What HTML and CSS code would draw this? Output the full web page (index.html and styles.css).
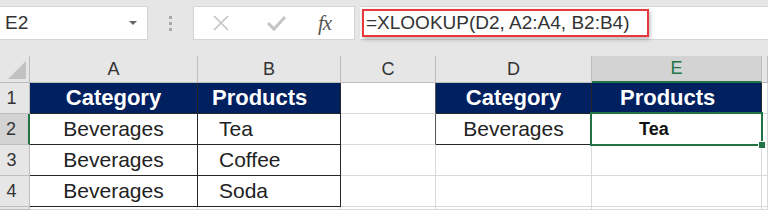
FILE: index.html
```html
<!DOCTYPE html>
<html>
<head>
    <title>XLOOKUP example</title>
    <link rel="stylesheet" href="styles.css">
</head>
<body>
    <div class="toolbar">
        <div class="namebox">
            <span>E2</span>
            <span class="caret"></span>
        </div>
        <div class="grip"><i></i><i></i><i></i></div>
        <div class="fx-buttons">
            <svg class="btn-icon" width="22" height="18" viewBox="0 0 22 18">
                <path d="M4 2 L18 16 M18 2 L4 16" stroke="#c4c4c4" stroke-width="1.6" fill="none"/>
            </svg>
            <svg class="btn-icon" width="22" height="18" viewBox="0 0 22 18">
                <path d="M3 9 L9 15 L20 3" stroke="#c4c4c4" stroke-width="3" fill="none"/>
            </svg>
            <span class="fx">fx</span>
        </div>
        <div class="formula">
            <span class="highlight">=XLOOKUP(D2, A2:A4, B2:B4)</span>
        </div>
    </div>

    <div class="sheet">
        <!-- column headers -->
        <div class="corner"><span class="tri"></span></div>
        <div class="hdr">A</div>
        <div class="hdr">B</div>
        <div class="hdr">C</div>
        <div class="hdr">D</div>
        <div class="hdr hdr-sel">E</div>
        <div class="hdr"></div>

        <!-- row 1 -->
        <div class="rh">1</div>
        <div class="cell navy tb center">Category</div>
        <div class="cell navy tb pad-b">Products</div>
        <div class="cell edge"></div>
        <div class="cell navy tb center">Category</div>
        <div class="cell navy tb pad-e">Products</div>
        <div class="cell"></div>

        <!-- row 2 -->
        <div class="rh rh-sel">2</div>
        <div class="cell tb center">Beverages</div>
        <div class="cell tb pad-b2">Tea</div>
        <div class="cell edge"></div>
        <div class="cell tb center">Beverages</div>
        <div class="cell active">Tea</div>
        <div class="cell"></div>

        <!-- row 3 -->
        <div class="rh">3</div>
        <div class="cell tb center">Beverages</div>
        <div class="cell tb pad-b2">Coffee</div>
        <div class="cell"></div>
        <div class="cell"></div>
        <div class="cell"></div>
        <div class="cell"></div>

        <!-- row 4 -->
        <div class="rh">4</div>
        <div class="cell tb center">Beverages</div>
        <div class="cell tb pad-b2">Soda</div>
        <div class="cell"></div>
        <div class="cell"></div>
        <div class="cell"></div>
        <div class="cell"></div>

        <!-- top sliver of row 5 -->
        <div class="rh"></div>
        <div class="cell"></div>
        <div class="cell"></div>
        <div class="cell"></div>
        <div class="cell"></div>
        <div class="cell"></div>
        <div class="cell"></div>
    </div>
</body>
</html>
```

FILE: styles.css
```css
body {
    margin: 0;
    width: 768px;
    height: 210px;
    overflow: hidden;
    background: #fff;
    font-family: "Liberation Sans", Arial, sans-serif;
    color: #222;
}

/* top bar */
.toolbar {
    display: flex;
    align-items: flex-start;
    height: 56px;
    padding-top: 6px;
    box-sizing: border-box;
    background: #e6e6e6;
}

.namebox {
    width: 148px;
    height: 34px;
    box-sizing: border-box;
    background: #fff;
    border: 1px solid #d4d4d4;
    border-left: none;
    display: flex;
    align-items: center;
    justify-content: space-between;
    padding: 0 10px 0 5px;
    font-size: 19px;
    color: #333;
}

.caret {
    width: 0;
    height: 0;
    border-left: 4px solid transparent;
    border-right: 4px solid transparent;
    border-top: 4px solid #666;
}

.grip {
    width: 45px;
    display: flex;
    flex-direction: column;
    align-items: center;
    gap: 3px;
    padding-top: 10px;
}

.grip i {
    width: 3px;
    height: 3px;
    background: #a8a8a8;
}

.fx-buttons {
    width: 162px;
    height: 34px;
    box-sizing: border-box;
    background: #fff;
    border: 1px solid #d4d4d4;
    display: flex;
    align-items: center;
    padding-left: 16px;
    gap: 33px;
}

.fx {
    font-family: "Liberation Serif", "Times New Roman", serif;
    font-style: italic;
    font-size: 21px;
    color: #555;
    letter-spacing: -1px;
    margin-left: -2px;
}

.formula {
    flex: 1;
    height: 34px;
    margin-left: 5px;
    box-sizing: border-box;
    background: #fff;
    border-top: 1px solid #d4d4d4;
    border-bottom: 1px solid #d4d4d4;
    padding: 2px 0 0 2px;
}

.highlight {
    display: inline-block;
    height: 28px;
    line-height: 24px;
    box-sizing: border-box;
    padding: 0 17px 0 2px;
    border: 2px solid #e8383d;
    box-shadow: 1px 2px 4px rgba(0,0,0,0.3);
    font-size: 19px;
    color: #333;
}

/* worksheet */
.sheet {
    display: grid;
    grid-template-columns: 30px 168px 143px 95px 156px 170px 1fr;
    grid-template-rows: 27px 31px 31px 31px 31px 3px;
}

.sheet > div {
    box-sizing: border-box;
    border-right: 1px solid #d9d9d9;
    border-bottom: 1px solid #d9d9d9;
    display: flex;
    align-items: center;
    white-space: nowrap;
}

.corner {
    background: #e6e6e6;
    position: relative;
}

.sheet > .corner,
.sheet > .hdr,
.sheet > .rh {
    border-color: #bdbdbd;
}

.tri {
    position: absolute;
    right: 3px;
    bottom: 3px;
    width: 0;
    height: 0;
    border-left: 18px solid transparent;
    border-bottom: 18px solid #c2c2c2;
}

.hdr {
    background: #e6e6e6;
    justify-content: center;
    font-size: 18px;
    color: #333;
}

.sheet > .hdr-sel {
    background: #d3d3d3;
    color: #217346;
    border-bottom: 2px solid #217346;
}

.rh {
    background: #e6e6e6;
    justify-content: center;
    padding-right: 6px;
    font-size: 18px;
    color: #333;
}

.sheet > .rh-sel {
    background: #d3d3d3;
    border-right: 2px solid #217346;
}

.cell {
    font-size: 21px;
    color: #222;
}

.center {
    justify-content: center;
}

.pad-b {
    padding-left: 14px;
}

.pad-b2 {
    padding-left: 21px;
}

.pad-e {
    padding-left: 28px;
}

.sheet > .tb {
    border-right-color: #262626;
    border-bottom-color: #262626;
}

.sheet > .edge {
    border-right-color: #555;
}

.navy {
    background: #002060;
    color: #fff;
    font-weight: bold;
    font-size: 22px;
}

.active {
    position: relative;
    padding-left: 47px;
    font-size: 18px;
    font-weight: bold;
    color: #111;
}

.active::before {
    content: "";
    position: absolute;
    left: -2px;
    top: -2px;
    right: -2px;
    bottom: -2px;
    border: 2px solid #217346;
}

.active::after {
    content: "";
    position: absolute;
    right: -5px;
    bottom: -5px;
    width: 6px;
    height: 6px;
    background: #217346;
    border: 1px solid #fff;
}
```
